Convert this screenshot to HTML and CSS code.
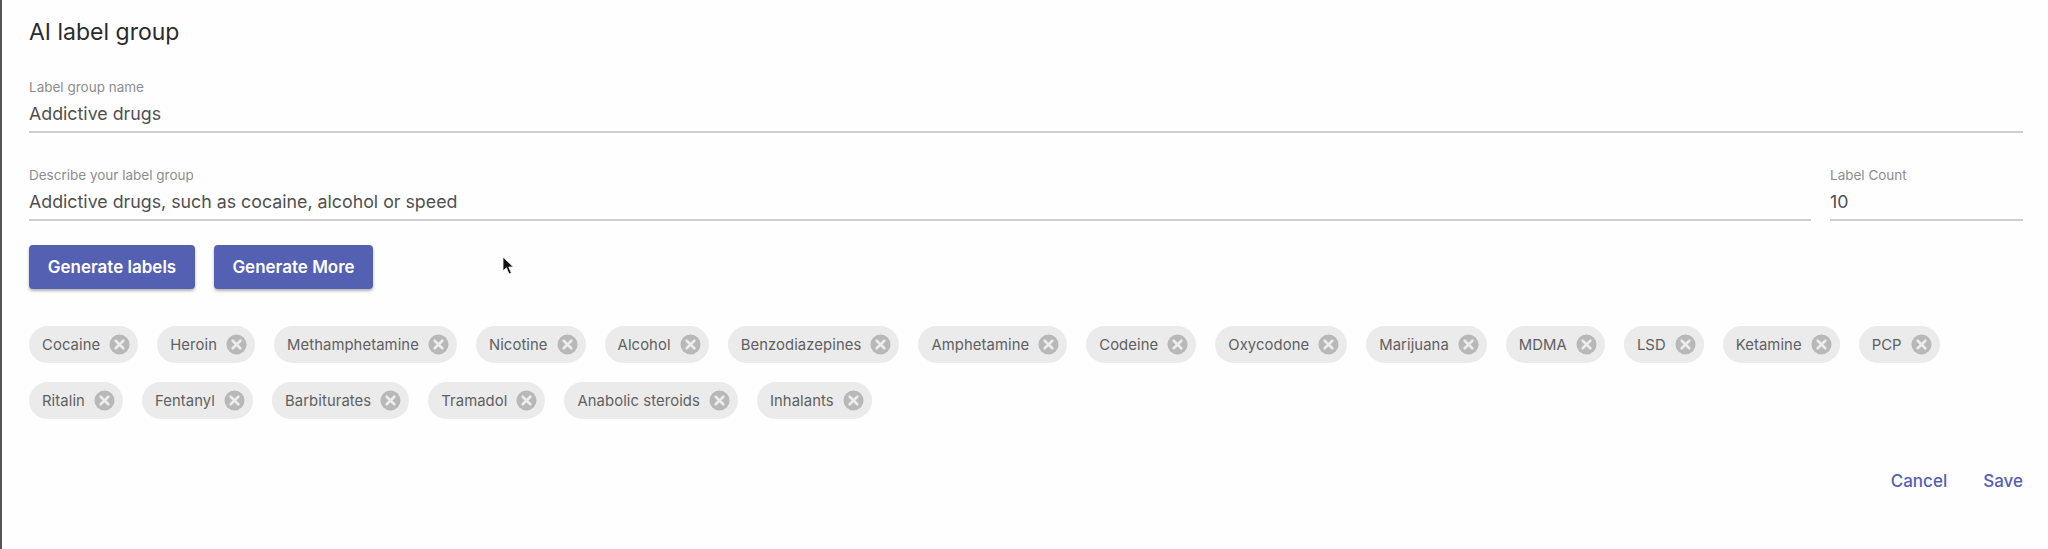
FILE: index.html
```html
<!DOCTYPE html>
<html lang="en">
<head>
    <meta charset="UTF-8">
    <title>AI label group</title>
    <link rel="stylesheet" href="styles.css">
</head>
<body>
    <svg width="0" height="0" class="defs">
        <symbol id="chip-x" viewBox="0 0 22 22">
            <circle cx="11" cy="11" r="10.5" fill="#b8b8b8"/>
            <path d="M7 7l8 8M15 7l-8 8" stroke="#ececec" stroke-width="2.8" stroke-linecap="round"/>
        </symbol>
    </svg>

    <main class="panel">
        <h1 class="title">AI label group</h1>

        <div class="field field-name">
            <label>Label group name</label>
            <div class="value">Addictive drugs</div>
        </div>

        <div class="field-row">
            <div class="field grow">
                <label>Describe your label group</label>
                <div class="value">Addictive drugs, such as cocaine, alcohol or speed</div>
            </div>
            <div class="field count">
                <label>Label Count</label>
                <div class="value">10</div>
            </div>
        </div>

        <div class="buttons">
            <button class="btn btn-first">Generate labels</button>
            <button class="btn btn-second">Generate More</button>
        </div>

        <div class="chips">
            <span class="chip">Cocaine<svg><use href="#chip-x"/></svg></span>
            <span class="chip">Heroin<svg><use href="#chip-x"/></svg></span>
            <span class="chip">Methamphetamine<svg><use href="#chip-x"/></svg></span>
            <span class="chip">Nicotine<svg><use href="#chip-x"/></svg></span>
            <span class="chip">Alcohol<svg><use href="#chip-x"/></svg></span>
            <span class="chip">Benzodiazepines<svg><use href="#chip-x"/></svg></span>
            <span class="chip">Amphetamine<svg><use href="#chip-x"/></svg></span>
            <span class="chip">Codeine<svg><use href="#chip-x"/></svg></span>
            <span class="chip">Oxycodone<svg><use href="#chip-x"/></svg></span>
            <span class="chip">Marijuana<svg><use href="#chip-x"/></svg></span>
            <span class="chip">MDMA<svg><use href="#chip-x"/></svg></span>
            <span class="chip">LSD<svg><use href="#chip-x"/></svg></span>
            <span class="chip">Ketamine<svg><use href="#chip-x"/></svg></span>
            <span class="chip">PCP<svg><use href="#chip-x"/></svg></span>
            <span class="chip">Ritalin<svg><use href="#chip-x"/></svg></span>
            <span class="chip">Fentanyl<svg><use href="#chip-x"/></svg></span>
            <span class="chip">Barbiturates<svg><use href="#chip-x"/></svg></span>
            <span class="chip">Tramadol<svg><use href="#chip-x"/></svg></span>
            <span class="chip">Anabolic steroids<svg><use href="#chip-x"/></svg></span>
            <span class="chip">Inhalants<svg><use href="#chip-x"/></svg></span>
        </div>

        <div class="actions">
            <a class="action">Cancel</a>
            <a class="action">Save</a>
        </div>
    </main>

    <svg class="cursor" width="13" height="20" viewBox="0 0 13 20">
        <path d="M1 1v14l3.4-3.2 2.6 6.2 2.4-1-2.6-6h4.6z" fill="#111" stroke="#fff" stroke-width="0.8"/>
    </svg>
</body>
</html>
```

FILE: styles.css
```css
html, body {
    margin: 0;
    height: 549px;
    overflow: hidden;
    background: #fefefe;
}
body {
    font-family: "Inter", "Liberation Sans", sans-serif;
    color: #3c3c3c;
    border-left: 2px solid #555;
    box-sizing: border-box;
    position: relative;
}
.defs {
    position: absolute;
}
.panel {
    padding: 0 25px 0 27px;
}
.title {
    margin: 0;
    padding-top: 19px;
    font-size: 23px;
    line-height: 26px;
    font-weight: 400;
    color: #2b2b2b;
}
.field label {
    display: block;
    font-size: 13.5px;
    line-height: 16px;
    color: #8d8d8d;
}
.field .value {
    font-size: 17.8px;
    line-height: 24px;
    padding: 7px 0 5px;
    border-bottom: 2px solid #cfcfcf;
    color: #505050;
}
.field-name {
    margin-top: 34px;
}
.field-row {
    display: flex;
    gap: 19px;
    margin-top: 34px;
}
.grow {
    flex: 1;
}
.count {
    width: 193px;
}
.buttons {
    display: flex;
    gap: 19px;
    margin-top: 24px;
}
.btn {
    height: 44px;
    padding: 0;
    border: none;
    border-radius: 4px;
    background: #5460b1;
    color: #fff;
    font-family: inherit;
    font-size: 17px;
    font-weight: 600;
    box-shadow: 0 2px 3px rgba(0, 0, 0, 0.3);
}
.btn-first {
    width: 166px;
}
.btn-second {
    width: 159px;
}
.chips {
    display: flex;
    flex-wrap: wrap;
    gap: 19px;
    margin-top: 37px;
}
.chip {
    display: flex;
    align-items: center;
    gap: 9px;
    height: 37px;
    padding: 0 8px 0 13px;
    border-radius: 19px;
    background: #ebebeb;
    font-size: 14.8px;
    letter-spacing: 0.1px;
    color: #606060;
}
.chip svg {
    width: 21px;
    height: 21px;
}
.actions {
    display: flex;
    justify-content: flex-end;
    gap: 36px;
    margin-top: 52px;
}
.action {
    font-size: 17px;
    font-weight: 500;
    line-height: 20px;
    color: #5460b1;
}
.cursor {
    position: absolute;
    left: 500px;
    top: 256px;
}
```
